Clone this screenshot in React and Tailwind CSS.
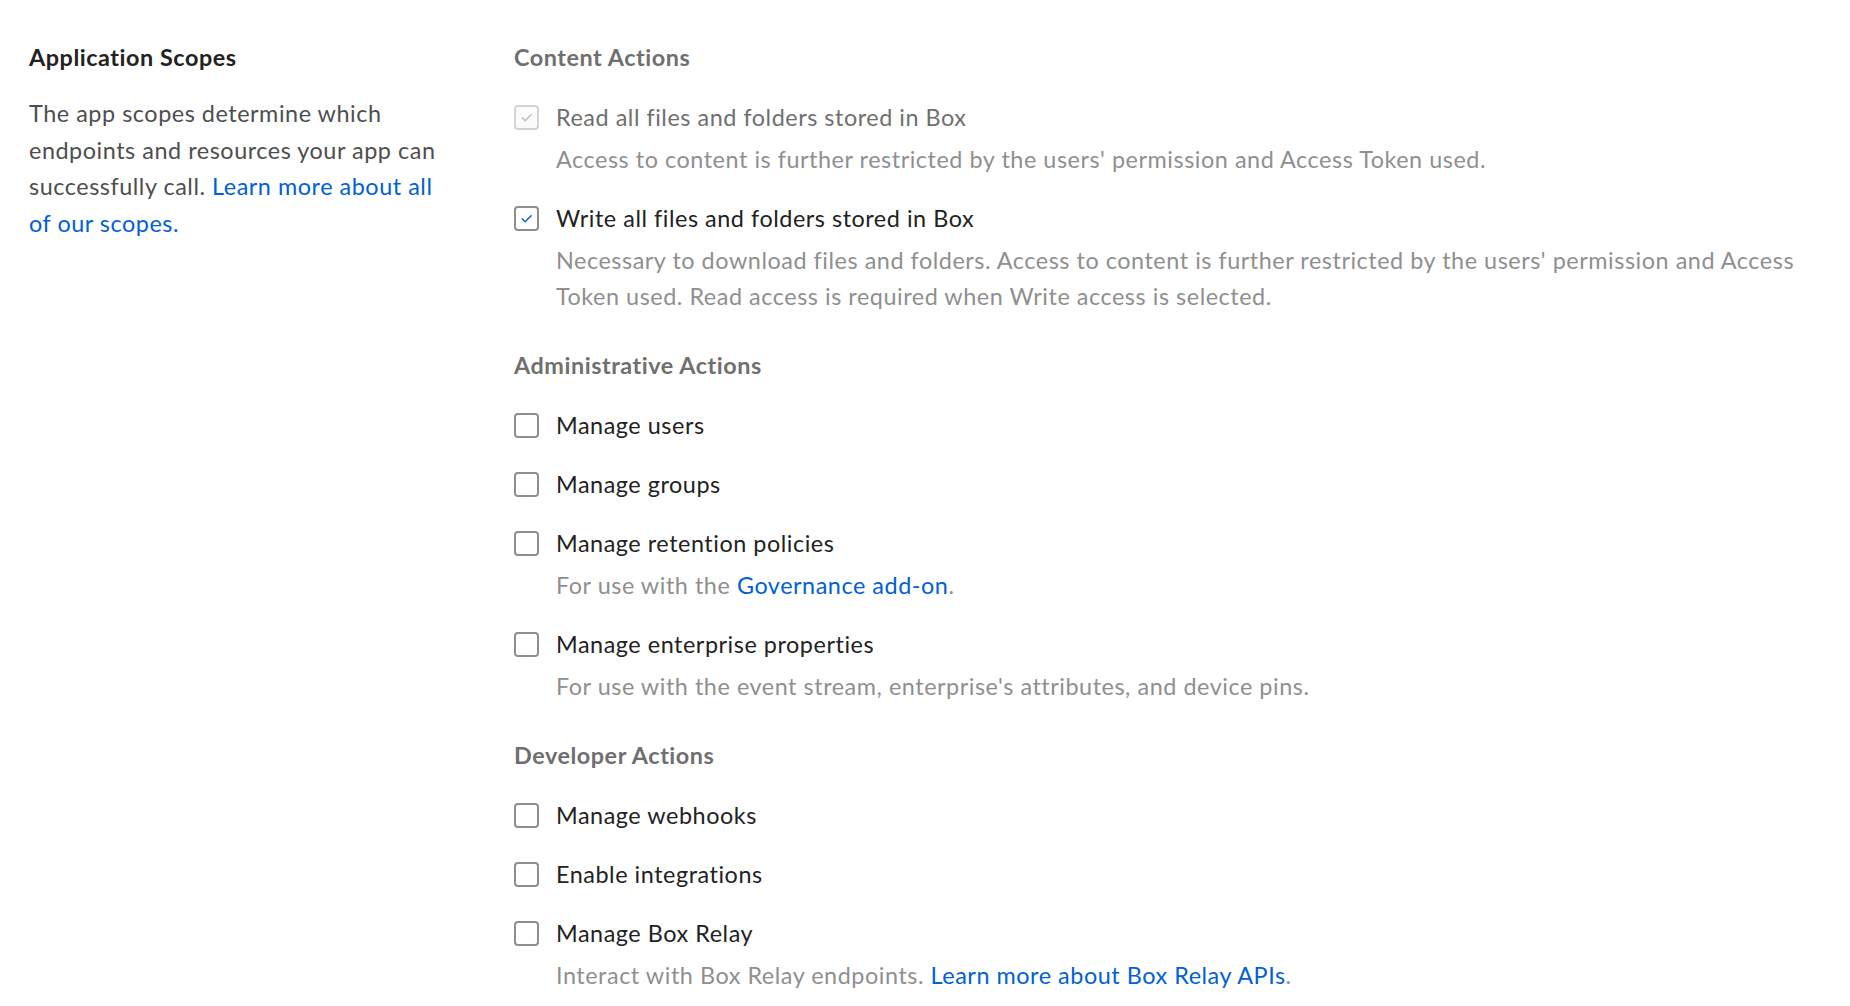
import React from 'react';

const LINK = 'text-[#0061d5]';

const Checkbox = ({ checked, disabled }) => {
  const box = disabled
    ? 'border-[#d4d4d4] bg-[#fbfbfb]'
    : 'border-[#8e8e8e] bg-white';
  return (
    <span
      className={`mt-[6px] flex h-[25px] w-[25px] shrink-0 items-center justify-center rounded-[4px] border-2 ${box}`}
    >
      {checked && (
        <svg width="17" height="17" viewBox="0 0 24 24" fill="none">
          <path
            d="M6 12.5l4 4L18.5 8"
            stroke={disabled ? '#bdbdbd' : '#0061d5'}
            strokeWidth="2"
            strokeLinecap="round"
            strokeLinejoin="round"
          />
        </svg>
      )}
    </span>
  );
};

const Scope = ({ label, checked, disabled, children }) => (
  <div className="flex gap-[17px]">
    <Checkbox checked={checked} disabled={disabled} />
    <div className="flex-1">
      <p className={`leading-[36px] ${disabled ? 'text-[#6f6f6f]' : 'text-[#222]'}`}>{label}</p>
      {children && <p className="mt-[6px] leading-[36px] text-[#8f8f8f]">{children}</p>}
    </div>
  </div>
);

const Section = ({ title, children }) => (
  <section>
    <h3 className="font-bold leading-[32px] text-[#6f6f6f]">{title}</h3>
    <div className="mt-[26px] flex flex-col gap-[23px]">{children}</div>
  </section>
);

export default function App() {
  return (
    <div
      className="flex min-h-screen bg-white pl-[29px] pr-[29px] pt-[41px] text-[23.4px] tracking-[0.54px]"
      style={{ fontFamily: 'Lato, "Open Sans", sans-serif' }}
    >
      <div className="w-[412px] shrink-0">
        <h2 className="font-bold leading-[32px] text-[#222]">Application Scopes</h2>
        <p className="mt-[22px] leading-[36.6px] text-[#4e4e4e]">
          The app scopes determine which endpoints and resources your app can successfully call.{' '}
          <a className={LINK}>Learn more about all of our scopes.</a>
        </p>
      </div>

      <div className="ml-[73px] flex flex-1 flex-col gap-[35px]">
        <Section title="Content Actions">
          <Scope label="Read all files and folders stored in Box" checked disabled>
            Access to content is further restricted by the users' permission and Access Token used.
          </Scope>
          <Scope label="Write all files and folders stored in Box" checked>
            Necessary to download files and folders. Access to content is further restricted by the
            users' permission and Access Token used. Read access is required when Write access is
            selected.
          </Scope>
        </Section>

        <Section title="Administrative Actions">
          <Scope label="Manage users" />
          <Scope label="Manage groups" />
          <Scope label="Manage retention policies">
            For use with the <a className={LINK}>Governance add-on</a>.
          </Scope>
          <Scope label="Manage enterprise properties">
            For use with the event stream, enterprise's attributes, and device pins.
          </Scope>
        </Section>

        <Section title="Developer Actions">
          <Scope label="Manage webhooks" />
          <Scope label="Enable integrations" />
          <Scope label="Manage Box Relay">
            Interact with Box Relay endpoints.{' '}
            <a className={LINK}>Learn more about Box Relay APIs</a>.
          </Scope>
        </Section>
      </div>
    </div>
  );
}
